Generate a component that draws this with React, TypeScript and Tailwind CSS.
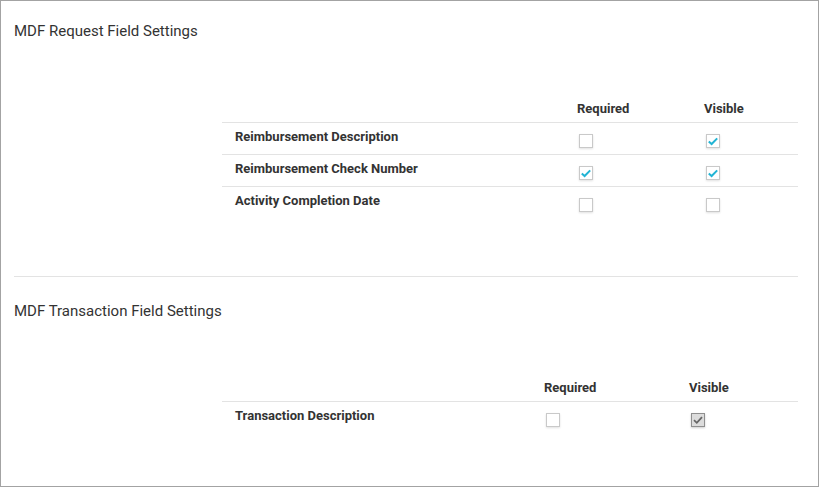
import React from 'react';

type Row = { label: string; required: boolean; visible: boolean; locked?: boolean };

function CheckBox({ checked, locked }: { checked: boolean; locked?: boolean }) {
  if (locked) {
    return (
      <span className="flex h-[14px] w-[14px] items-center justify-center border border-[#8f8f8f] bg-[#dcdcdc] shadow-[0_1px_2px_rgba(0,0,0,0.2)]">
        <svg width="12" height="12" viewBox="0 0 12 12" fill="none">
          <path d="M2 6.2 L4.8 8.8 L10 3.2" stroke="#666" strokeWidth="1.8" />
        </svg>
      </span>
    );
  }
  return (
    <span className="flex h-[14px] w-[14px] items-center justify-center border border-[#c9c9c9] bg-white shadow-[0_1px_2px_rgba(0,0,0,0.12)]">
      {checked && (
        <svg width="12" height="12" viewBox="0 0 12 12" fill="none">
          <path d="M1.8 6.4 L4.6 9 L10.2 3.4" stroke="#22b4d4" strokeWidth="2" />
        </svg>
      )}
    </span>
  );
}

function SettingsTable({ rows, cols }: { rows: Row[]; cols: string }) {
  return (
    <div className="ml-[208px] text-[13px] font-bold text-[#333]">
      <div className={`grid ${cols} h-[27px] items-center`}>
        <span />
        <span className="pl-[13px]">Required</span>
        <span className="pl-[13px]">Visible</span>
      </div>
      {rows.map((r) => (
        <div key={r.label} className={`grid ${cols} h-[32px] border-t border-[#e3e3e3] pt-[6px] leading-[16px]`}>
          <span className="pl-[13px]">{r.label}</span>
          <span className="pl-[15px] pt-[5px]">
            <CheckBox checked={r.required} />
          </span>
          <span className="pl-[15px] pt-[5px]">
            <CheckBox checked={r.visible} locked={r.locked} />
          </span>
        </div>
      ))}
    </div>
  );
}

export default function App() {
  const requestRows: Row[] = [
    { label: 'Reimbursement Description', required: false, visible: true },
    { label: 'Reimbursement Check Number', required: true, visible: true },
    { label: 'Activity Completion Date', required: false, visible: false },
  ];
  const transactionRows: Row[] = [
    { label: 'Transaction Description', required: false, visible: true, locked: true },
  ];

  return (
    <div
      className="h-[487px] w-[819px] border border-[#a3a3a3] bg-white pl-[13px] pr-[20px] pt-[20px]"
      style={{ fontFamily: 'Roboto, "Liberation Sans", sans-serif' }}
    >
      <h2 className="text-[15px] leading-[20px] text-[#333]">MDF Request Field Settings</h2>
      <div className="mt-[54px]">
        <SettingsTable rows={requestRows} cols="grid-cols-[342px_127px_1fr]" />
      </div>
      <div className="mt-[58px] border-t border-[#e3e3e3]" />
      <h2 className="mt-[24px] text-[15px] leading-[20px] text-[#333]">MDF Transaction Field Settings</h2>
      <div className="mt-[53px]">
        <SettingsTable rows={transactionRows} cols="grid-cols-[309px_145px_1fr]" />
      </div>
    </div>
  );
}
